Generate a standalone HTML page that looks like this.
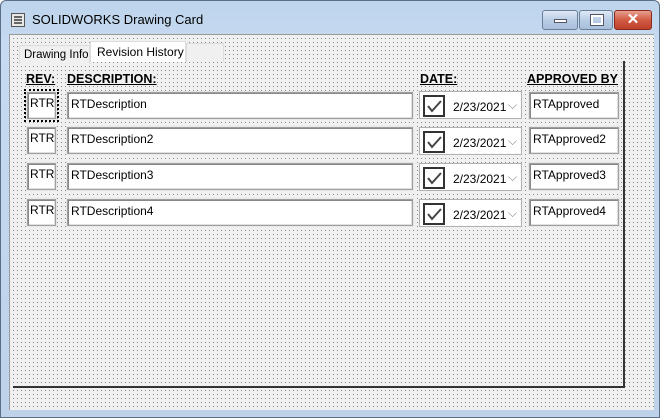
<!DOCTYPE html>
<html><head><style>
*{margin:0;padding:0;box-sizing:border-box}
body{width:660px;height:418px;overflow:hidden;font-family:"Liberation Sans",sans-serif;background:#fff}
.win{position:absolute;left:0;top:0;width:660px;height:418px;background:linear-gradient(#bcd4ec,#c6daf0 40px,#bed3ea);border:1px solid #5a6e86;border-radius:6px 6px 0 0}
.title{position:absolute;left:31px;top:11px;font-size:13px;color:#000}
.icon{position:absolute;left:10px;top:12px;width:14px;height:14px;border:1px solid #555;background:#e8e8e8}
.icon:before{content:"";position:absolute;left:2px;top:2px;width:8px;height:2px;background:#666;box-shadow:0 3px #666,0 6px #666}
.btn{position:absolute;top:9px;height:20px;border:1px solid #6b7f98;border-radius:3px;background:linear-gradient(#dfe9f5,#b9cde5 50%,#a8bfdc)}
.dots{background-color:#f0f0f0;background-image:linear-gradient(90deg,#f0f0f0 3px,transparent 3px),linear-gradient(#f0f0f0 3px,#8a8a8a 3px);background-size:4px 4px;background-position:0 0}
.client{position:absolute;left:8px;top:33px;width:645px;height:376px;border-top:1px solid #999;border-left:1px solid #999}
.tab{position:absolute;font-size:12px;padding:3px 5px;white-space:nowrap;overflow:hidden}
.lbl{position:absolute;font-size:12.5px;font-weight:bold;text-decoration:underline;background:#f0f0f0}
.tb{position:absolute;height:27px;background:#fff;border:1px solid #a0a0a0;box-shadow:inset 1px 1px #888,inset -1px -1px #e0e0e0,0 0 0 1px #e6e6e6;font-size:12px;padding:4px 3px}
.dt{position:absolute;height:28px;width:103px;background:#fff;border:1px solid #b0b0b0;font-size:12px}
.cb{position:absolute;left:3px;top:3px;width:22px;height:22px;border:2px solid #333;background:#fff}
</style></head><body>
<div class="win">
<div class="icon"></div>
<div class="title">SOLIDWORKS Drawing Card</div>
<div class="btn" style="left:541px;width:36px"><div style="position:absolute;left:11px;top:8px;width:13px;height:4px;background:#fff;border:1px solid #556"></div></div>
<div class="btn" style="left:578px;width:34px"><div style="position:absolute;left:11px;top:4px;width:12px;height:10px;border:2px solid #fff;outline:1px solid #556"></div></div>
<div class="btn" style="left:613px;width:38px;border-color:#8a2a1c;background:linear-gradient(#e8a090,#d05a42 50%,#c0402a);color:#fff;font-weight:bold;font-size:15px;text-align:center;line-height:18px">✕</div>
<div class="client dots"></div>
<div style="position:absolute;left:12px;top:60px;width:612px;height:327px;border-right:2px solid #333;border-bottom:2px solid #333"></div>
<div class="tab" style="left:18px;top:44px;width:71px;background:#f0f0f0;border:1px solid #ddd;border-bottom:none;padding-left:4px;font-size:11.5px">Drawing Info</div>
<div class="tab" style="left:89px;top:40px;width:96px;background:#fff;border:1px solid #ddd;border-bottom:none;height:21px;padding-left:6px">Revision History</div>
<div style="position:absolute;left:185px;top:42px;width:38px;height:19px;background:#f0f0f0;border:1px solid #ddd;border-bottom:none"></div>
<div class="lbl" style="left:25px;top:71px">REV:</div>
<div class="lbl" style="left:66px;top:71px">DESCRIPTION:</div>
<div class="lbl" style="left:419px;top:71px">DATE:</div>
<div class="lbl" style="left:526px;top:71px">APPROVED BY</div>

<div class="tb" style="left:26px;top:91px;width:29px;padding:3px 2px;outline:2px dotted #000;outline-offset:1px">RTR</div>
<div class="tb" style="left:66px;top:91px;width:346px">RTDescription</div>
<div class="dt" style="left:418px;top:90px"><div class="cb"><svg width="18" height="18"><path d="M3 9l4 5 9-10" stroke="#444" stroke-width="2" fill="none"/></svg></div><span style="position:absolute;left:33px;top:8px">2/23/2021</span><span style="position:absolute;left:88px;top:6px;color:#888">⌵</span></div>
<div class="tb" style="left:528px;top:91px;width:90px">RTApproved</div>

<div class="tb" style="left:26px;top:126px;width:29px;padding:3px 2px">RTR</div>
<div class="tb" style="left:66px;top:126px;width:346px">RTDescription2</div>
<div class="dt" style="left:418px;top:126px"><div class="cb"><svg width="18" height="18"><path d="M3 9l4 5 9-10" stroke="#444" stroke-width="2" fill="none"/></svg></div><span style="position:absolute;left:33px;top:8px">2/23/2021</span><span style="position:absolute;left:88px;top:6px;color:#888">⌵</span></div>
<div class="tb" style="left:528px;top:126px;width:90px">RTApproved2</div>

<div class="tb" style="left:26px;top:162px;width:29px;padding:3px 2px">RTR</div>
<div class="tb" style="left:66px;top:162px;width:346px">RTDescription3</div>
<div class="dt" style="left:418px;top:162px"><div class="cb"><svg width="18" height="18"><path d="M3 9l4 5 9-10" stroke="#444" stroke-width="2" fill="none"/></svg></div><span style="position:absolute;left:33px;top:8px">2/23/2021</span><span style="position:absolute;left:88px;top:6px;color:#888">⌵</span></div>
<div class="tb" style="left:528px;top:162px;width:90px">RTApproved3</div>

<div class="tb" style="left:26px;top:198px;width:29px;padding:3px 2px">RTR</div>
<div class="tb" style="left:66px;top:198px;width:346px">RTDescription4</div>
<div class="dt" style="left:418px;top:198px"><div class="cb"><svg width="18" height="18"><path d="M3 9l4 5 9-10" stroke="#444" stroke-width="2" fill="none"/></svg></div><span style="position:absolute;left:33px;top:8px">2/23/2021</span><span style="position:absolute;left:88px;top:6px;color:#888">⌵</span></div>
<div class="tb" style="left:528px;top:198px;width:90px">RTApproved4</div>
</div>
</body></html>
